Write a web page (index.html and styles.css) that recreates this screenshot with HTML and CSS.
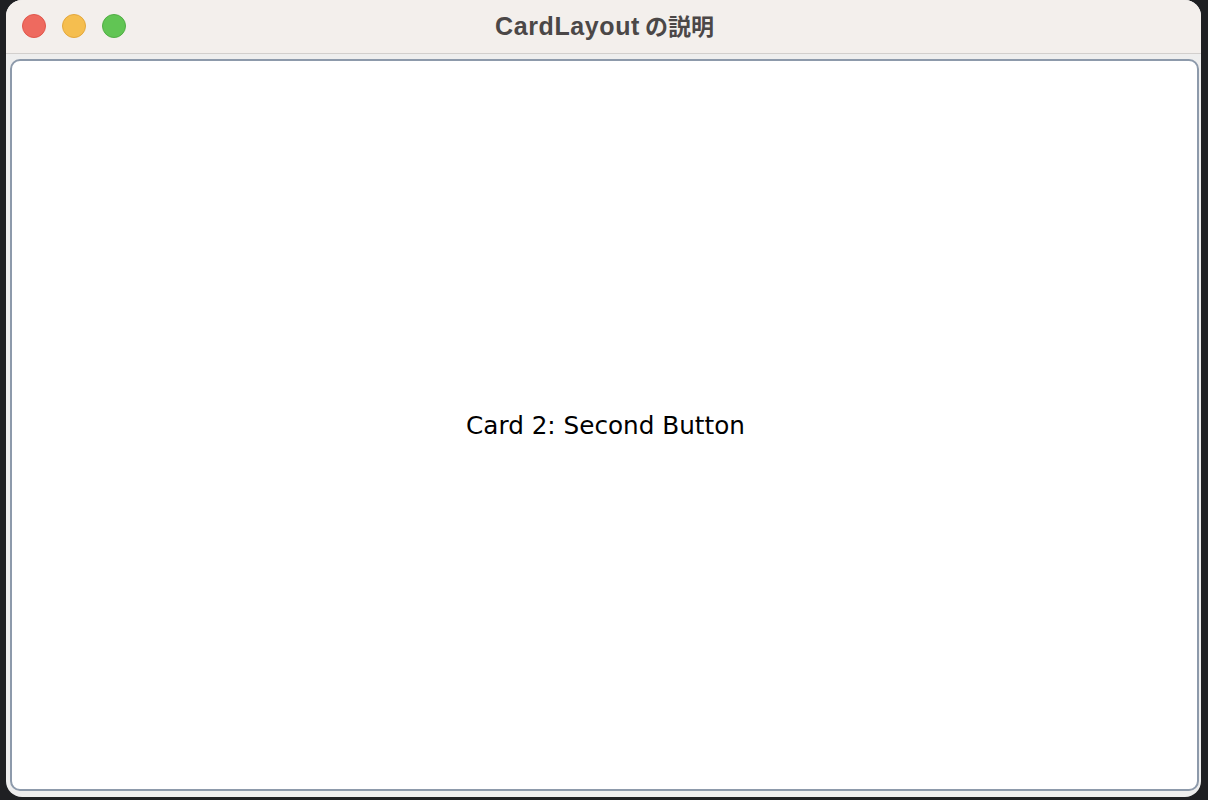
FILE: index.html
```html
<!DOCTYPE html>
<html lang="ja">
<head>
<meta charset="UTF-8">
<title>CardLayoutの説明</title>
<link rel="stylesheet" href="styles.css">
</head>
<body>

<div class="window">
<div class="titlebar">
<div class="lights">
<span class="light red"></span>
<span class="light yellow"></span>
<span class="light green"></span>
</div>
<div class="title">CardLayout<span class="jp">の説明</span></div>
</div>
<div class="content">
<div class="card">
<div class="label">Card 2: Second Button</div>
</div>
</div>
</div>

</body>
</html>
```

FILE: styles.css
```css
html,body{
margin:0;
height:100%;
}

body{
background:#1f2023;
}

.window{
margin-left:6px;
width:1195px;
height:797px;
background:#eeeeee;
border-radius:16px;
overflow:hidden;
display:flex;
flex-direction:column;
}

.titlebar{
height:53px;
flex:none;
background:#f3efec;
border-bottom:1px solid #d2cfcd;
position:relative;
display:flex;
align-items:center;
justify-content:center;
}

.lights{
position:absolute;
left:16px; top:14px;
display:flex;
gap:16px;
}

.light{
width:24px;
height:24px;
border-radius:50%;
box-sizing:border-box;
}
.red{background:#ee6a5f; border:1px solid #e0564c;}
.yellow{background:#f5be4f; border:1px solid #e3a73c;}
.green{background:#61c554; border:1px solid #51ad45;}

.title{
font-family:"Liberation Sans","Noto Sans CJK JP",sans-serif;
font-weight:bold;
font-size:25px;
letter-spacing:0.6px;
color:#4b4747;
margin-left:2px;
margin-top:-3px;
}
.title .jp{
margin-left:5px;
letter-spacing:0;
font-family:"Noto Sans CJK JP",sans-serif;
font-size:23px;
}

.content{
flex:1;
padding:5px 2px 6px 4px;
display:flex;
}

.card{
flex:1;
background:#fff;
border:2px solid #8d9aab;
border-radius:10px;
display:flex;
align-items:center;
justify-content:center;
}

.label{
font-family:"DejaVu Sans",sans-serif;
font-size:24.7px;
color:#000;
margin-left:2px;
}
```
